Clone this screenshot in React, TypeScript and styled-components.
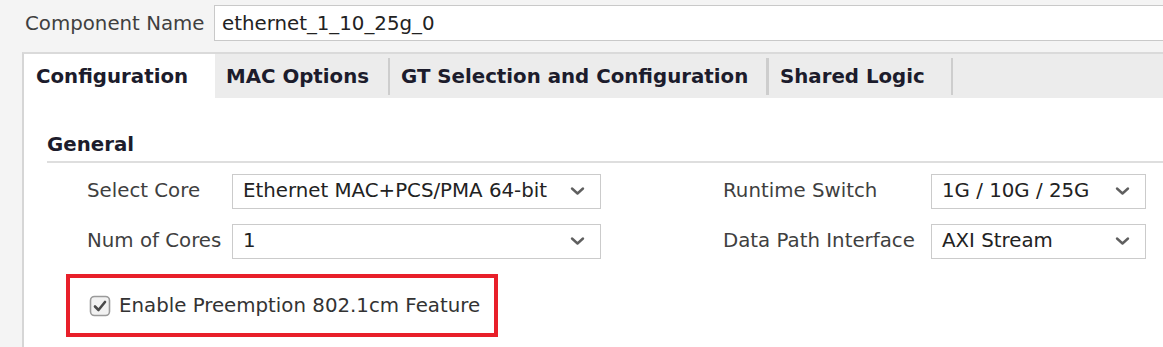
import React from 'react';
import styled, { createGlobalStyle } from 'styled-components';

const GlobalStyle = createGlobalStyle`
	html, body {
		margin: 0;
		padding: 0;
		height: 100%;
		overflow: hidden;
		background: #f4f4f4;
		font-family: 'DejaVu Sans', Verdana, sans-serif;
		font-size: 19.8px;
		color: #333;
	}
`

// tab label + its width in px, as measured off the dialog
const tabs: [string, number][] = [
	['Configuration', 191],
	['MAC Options', 173],
	['GT Selection and Configuration', 376],
	['Shared Logic', 182],
];

function Chevron() {
	return (
		<svg width='15' height='10' viewBox='0 0 15 10'>
			<polyline points='2,2.5 7.5,7.5 13,2.5' fill='none' stroke='#5f5f5f' strokeWidth='2.4' strokeLinecap='round' strokeLinejoin='round' />
		</svg>
	);
}

function Select({ value, width }: { value: string; width: number }) {
	return (
		<StyledSelect $width={width}>
			<span>{value}</span>
			<Chevron />
		</StyledSelect>
	);
}

function CheckIcon() {
	return (
		<svg width='22' height='22' viewBox='0 0 22 22'>
			<rect x='1.5' y='1.5' width='19' height='19' rx='4' fill='#f2f2f2' stroke='#9a9a9a' strokeWidth='1.6' />
			<polyline points='6,11.5 9.5,15 16,7' fill='none' stroke='#4a4a4a' strokeWidth='2.6' strokeLinecap='round' strokeLinejoin='round' />
		</svg>
	);
}

function App() {
	return (
		<>
			<GlobalStyle />
			<NameRow>
				<NameLabel>Component Name</NameLabel>
				<NameInput>ethernet_1_10_25g_0</NameInput>
			</NameRow>
			<Panel>
				<TabBar>
					{tabs.map(([t, w], i) => (
						<React.Fragment key={t}>
							<Tab $active={i === 0} $width={w}>{t}</Tab>
							{i > 0 && <TabSep $wide={i === 2} />}
						</React.Fragment>
					))}
				</TabBar>
				<Content>
					<Heading>General</Heading>
					<FormGrid>
						<Label>Select Core</Label>
						<Select value='Ethernet MAC+PCS/PMA 64-bit' width={369} />
						<Label>Runtime Switch</Label>
						<Select value='1G / 10G / 25G' width={215} />
						<Label>Num of Cores</Label>
						<Select value='1' width={369} />
						<Label>Data Path Interface</Label>
						<Select value='AXI Stream' width={215} />
					</FormGrid>
					<Highlight>
						<CheckIcon />
						<span>Enable Preemption 802.1cm Feature</span>
					</Highlight>
				</Content>
			</Panel>
		</>
	);
}

const NameRow = styled.div`
	display: flex;
	align-items: center;
	padding: 5px 0 0 25px;
`
const Label = styled.div`
	color: #3f3f3f;
	white-space: nowrap;
`
const NameLabel = styled(Label)`
	width: 189px;
	flex: none;
`
const NameInput = styled.div`
	flex: 1;
	height: 36px;
	box-sizing: border-box;
	margin-right: -6px;
	background: #fff;
	border: 1px solid #c9c9c9;
	padding-left: 7px;
	display: flex;
	align-items: center;
	color: #222;
`
const Panel = styled.div`
	margin: 11px 0 0 22px;
	border-top: 2px solid #dadada;
	border-left: 2px solid #d6d6d6;
	background: #fff;
	height: calc(100vh - 52px);
`
const TabBar = styled.div`
	display: flex;
	align-items: stretch;
	height: 44px;
	background: #ececec;
`
const Tab = styled.div<{ $active?: boolean; $width: number }>`
	display: flex;
	align-items: center;
	box-sizing: border-box;
	width: ${(p) => p.$width}px;
	padding-left: ${(p) => (p.$active ? 12 : 11)}px;
	background: ${(p) => (p.$active ? '#fff' : 'transparent')};
	font-weight: bold;
	color: #1c1c2c;
	white-space: nowrap;
`
const TabSep = styled.div<{ $wide?: boolean }>`
	align-self: center;
	width: ${(p) => (p.$wide ? 3 : 2)}px;
	height: 37px;
	background: #cdcdcd;
`
const Content = styled.div`
	padding: 36px 0 0 23px;
`
const Heading = styled.div`
	font-weight: bold;
	color: #1c1c2c;
	line-height: 22px;
	padding-bottom: 5px;
	border-bottom: 2px solid #dedede;
`
const FormGrid = styled.div`
	display: grid;
	grid-template-columns: 145px 369px 122px 208px 215px;
	grid-auto-rows: 35px;
	row-gap: 15px;
	align-items: center;
	margin: 11px 0 0 40px;
	> :nth-child(4n + 3) {
		grid-column: 4;
	}
	> ${Label} {
		padding-bottom: 3px;
	}
`
const StyledSelect = styled.div<{ $width: number }>`
	width: ${(p) => p.$width}px;
	height: 35px;
	box-sizing: border-box;
	border: 1px solid #cbcbcb;
	background: #fff;
	display: flex;
	align-items: center;
	justify-content: space-between;
	padding: 0 15px 2px 10px;
	color: #222;
	white-space: nowrap;
`
const Highlight = styled.div`
	display: flex;
	align-items: center;
	gap: 8px;
	width: 432px;
	height: 63px;
	box-sizing: border-box;
	margin: 15px 0 0 19px;
	padding-left: 19px;
	border: 4px solid #e8202a;
	color: #333;
`

export default App;
